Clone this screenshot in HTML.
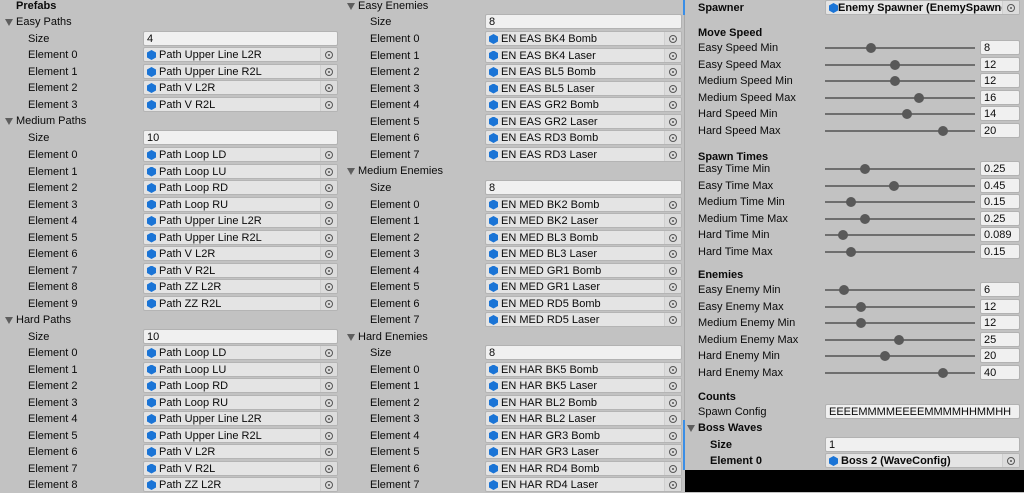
<!DOCTYPE html>
<html><head><meta charset="utf-8"><style>
*{margin:0;padding:0;box-sizing:border-box}
body{width:1024px;height:492px;background:#c2c2c2;font-family:"Liberation Sans",sans-serif;font-size:11px;color:#0a0a0a;position:relative;overflow:hidden}
.r{position:absolute;height:16px;line-height:16px;white-space:nowrap;margin-top:1px}
.b{font-weight:bold}
.t{position:absolute;width:0;height:0;border-left:4.5px solid transparent;border-right:4.5px solid transparent;border-top:7px solid #5e5e5e;top:5px}
.f{position:absolute;top:0;height:15px;line-height:14px;background:#f0f0f0;border:1px solid #b2b2b2;border-radius:2px;padding-left:3px;overflow:hidden}
.o{position:absolute;top:0;height:15px;line-height:14px;background:#e4e4e4;border:1px solid #b4b4b4;border-radius:2px;padding-left:15px;overflow:hidden}
.o:before{content:"";position:absolute;left:3px;top:2px;width:9px;height:10px;background:#1a74d6;clip-path:polygon(50% 0,100% 25%,100% 75%,50% 100%,0 75%,0 25%)}
.o:after{content:"";position:absolute;right:0;top:0;width:16px;height:13px;background:#dcdcdc;border-left:1px solid #cfcfcf}
.p{position:absolute;right:4px;top:3px;width:8px;height:8px;border:1px solid #555;border-radius:50%;z-index:2}
.p:after{content:"";position:absolute;left:2px;top:2px;width:2px;height:2px;background:#555;border-radius:50%}
.tr{position:absolute;left:825px;top:7px;width:150px;height:2px;background:#6e6e6e}
.k{position:absolute;top:3px;width:10px;height:10px;border-radius:50%;background:#595959}
.v{position:absolute;left:980px;width:40px}
</style></head><body>
<div style="position:absolute;left:684px;top:0;width:1px;height:470px;background:#a9a9a9"></div>
<div style="position:absolute;left:683px;top:0;width:2px;height:15px;background:#3a8ee6"></div>
<div style="position:absolute;left:683px;top:420px;width:2px;height:50px;background:#3a8ee6"></div>
<div style="position:absolute;left:685px;top:470px;width:339px;height:22px;background:#000"></div>

<!-- LEFT -->
<div class="r b" style="top:-3px;left:16px">Prefabs</div>
<div class="r" style="top:13px;left:0"><i class="t" style="left:5px"></i><span style="position:absolute;left:16px">Easy Paths</span></div>
<div class="r" style="top:30px;left:28px;width:312px">Size<div class="f" style="left:115px;width:195px">4</div></div>
<div class="r" style="top:46px;left:28px;width:312px">Element 0<div class="o" style="left:115px;width:195px">Path Upper Line L2R<i class="p"></i></div></div>
<div class="r" style="top:63px;left:28px;width:312px">Element 1<div class="o" style="left:115px;width:195px">Path Upper Line R2L<i class="p"></i></div></div>
<div class="r" style="top:79px;left:28px;width:312px">Element 2<div class="o" style="left:115px;width:195px">Path V L2R<i class="p"></i></div></div>
<div class="r" style="top:96px;left:28px;width:312px">Element 3<div class="o" style="left:115px;width:195px">Path V R2L<i class="p"></i></div></div>
<div class="r" style="top:112px;left:0"><i class="t" style="left:5px"></i><span style="position:absolute;left:16px">Medium Paths</span></div>
<div class="r" style="top:129px;left:28px;width:312px">Size<div class="f" style="left:115px;width:195px">10</div></div>
<div class="r" style="top:146px;left:28px">Element 0<div class="o" style="left:115px;width:195px">Path Loop LD<i class="p"></i></div></div>
<div class="r" style="top:162.5px;left:28px">Element 1<div class="o" style="left:115px;width:195px">Path Loop LU<i class="p"></i></div></div>
<div class="r" style="top:179px;left:28px">Element 2<div class="o" style="left:115px;width:195px">Path Loop RD<i class="p"></i></div></div>
<div class="r" style="top:195.5px;left:28px">Element 3<div class="o" style="left:115px;width:195px">Path Loop RU<i class="p"></i></div></div>
<div class="r" style="top:212px;left:28px">Element 4<div class="o" style="left:115px;width:195px">Path Upper Line L2R<i class="p"></i></div></div>
<div class="r" style="top:228.5px;left:28px">Element 5<div class="o" style="left:115px;width:195px">Path Upper Line R2L<i class="p"></i></div></div>
<div class="r" style="top:245px;left:28px">Element 6<div class="o" style="left:115px;width:195px">Path V L2R<i class="p"></i></div></div>
<div class="r" style="top:261.5px;left:28px">Element 7<div class="o" style="left:115px;width:195px">Path V R2L<i class="p"></i></div></div>
<div class="r" style="top:278px;left:28px">Element 8<div class="o" style="left:115px;width:195px">Path ZZ L2R<i class="p"></i></div></div>
<div class="r" style="top:294.5px;left:28px">Element 9<div class="o" style="left:115px;width:195px">Path ZZ R2L<i class="p"></i></div></div>
<div class="r" style="top:311px;left:0"><i class="t" style="left:5px"></i><span style="position:absolute;left:16px">Hard Paths</span></div>
<div class="r" style="top:328px;left:28px">Size<div class="f" style="left:115px;width:195px">10</div></div>
<div class="r" style="top:344px;left:28px">Element 0<div class="o" style="left:115px;width:195px">Path Loop LD<i class="p"></i></div></div>
<div class="r" style="top:360.5px;left:28px">Element 1<div class="o" style="left:115px;width:195px">Path Loop LU<i class="p"></i></div></div>
<div class="r" style="top:377px;left:28px">Element 2<div class="o" style="left:115px;width:195px">Path Loop RD<i class="p"></i></div></div>
<div class="r" style="top:393.5px;left:28px">Element 3<div class="o" style="left:115px;width:195px">Path Loop RU<i class="p"></i></div></div>
<div class="r" style="top:410px;left:28px">Element 4<div class="o" style="left:115px;width:195px">Path Upper Line L2R<i class="p"></i></div></div>
<div class="r" style="top:426.5px;left:28px">Element 5<div class="o" style="left:115px;width:195px">Path Upper Line R2L<i class="p"></i></div></div>
<div class="r" style="top:443px;left:28px">Element 6<div class="o" style="left:115px;width:195px">Path V L2R<i class="p"></i></div></div>
<div class="r" style="top:459.5px;left:28px">Element 7<div class="o" style="left:115px;width:195px">Path V R2L<i class="p"></i></div></div>
<div class="r" style="top:476px;left:28px">Element 8<div class="o" style="left:115px;width:195px">Path ZZ L2R<i class="p"></i></div></div>

<!-- MIDDLE -->
<div class="r" style="top:-3px;left:0"><i class="t" style="left:347px"></i><span style="position:absolute;left:358px">Easy Enemies</span></div>
<div class="r" style="top:13px;left:370px">Size<div class="f" style="left:115px;width:197px">8</div></div>
<div class="r" style="top:30px;left:370px">Element 0<div class="o" style="left:115px;width:197px">EN EAS BK4 Bomb<i class="p"></i></div></div>
<div class="r" style="top:46.5px;left:370px">Element 1<div class="o" style="left:115px;width:197px">EN EAS BK4 Laser<i class="p"></i></div></div>
<div class="r" style="top:63px;left:370px">Element 2<div class="o" style="left:115px;width:197px">EN EAS BL5 Bomb<i class="p"></i></div></div>
<div class="r" style="top:79.5px;left:370px">Element 3<div class="o" style="left:115px;width:197px">EN EAS BL5 Laser<i class="p"></i></div></div>
<div class="r" style="top:96px;left:370px">Element 4<div class="o" style="left:115px;width:197px">EN EAS GR2 Bomb<i class="p"></i></div></div>
<div class="r" style="top:112.5px;left:370px">Element 5<div class="o" style="left:115px;width:197px">EN EAS GR2 Laser<i class="p"></i></div></div>
<div class="r" style="top:129px;left:370px">Element 6<div class="o" style="left:115px;width:197px">EN EAS RD3 Bomb<i class="p"></i></div></div>
<div class="r" style="top:145.5px;left:370px">Element 7<div class="o" style="left:115px;width:197px">EN EAS RD3 Laser<i class="p"></i></div></div>
<div class="r" style="top:162px;left:0"><i class="t" style="left:347px"></i><span style="position:absolute;left:358px">Medium Enemies</span></div>
<div class="r" style="top:178.5px;left:370px">Size<div class="f" style="left:115px;width:197px">8</div></div>
<div class="r" style="top:195.5px;left:370px">Element 0<div class="o" style="left:115px;width:197px">EN MED BK2 Bomb<i class="p"></i></div></div>
<div class="r" style="top:212px;left:370px">Element 1<div class="o" style="left:115px;width:197px">EN MED BK2 Laser<i class="p"></i></div></div>
<div class="r" style="top:228.5px;left:370px">Element 2<div class="o" style="left:115px;width:197px">EN MED BL3 Bomb<i class="p"></i></div></div>
<div class="r" style="top:245px;left:370px">Element 3<div class="o" style="left:115px;width:197px">EN MED BL3 Laser<i class="p"></i></div></div>
<div class="r" style="top:261.5px;left:370px">Element 4<div class="o" style="left:115px;width:197px">EN MED GR1 Bomb<i class="p"></i></div></div>
<div class="r" style="top:278px;left:370px">Element 5<div class="o" style="left:115px;width:197px">EN MED GR1 Laser<i class="p"></i></div></div>
<div class="r" style="top:294.5px;left:370px">Element 6<div class="o" style="left:115px;width:197px">EN MED RD5 Bomb<i class="p"></i></div></div>
<div class="r" style="top:311px;left:370px">Element 7<div class="o" style="left:115px;width:197px">EN MED RD5 Laser<i class="p"></i></div></div>
<div class="r" style="top:327.5px;left:0"><i class="t" style="left:347px"></i><span style="position:absolute;left:358px">Hard Enemies</span></div>
<div class="r" style="top:344px;left:370px">Size<div class="f" style="left:115px;width:197px">8</div></div>
<div class="r" style="top:360.5px;left:370px">Element 0<div class="o" style="left:115px;width:197px">EN HAR BK5 Bomb<i class="p"></i></div></div>
<div class="r" style="top:377px;left:370px">Element 1<div class="o" style="left:115px;width:197px">EN HAR BK5 Laser<i class="p"></i></div></div>
<div class="r" style="top:393.5px;left:370px">Element 2<div class="o" style="left:115px;width:197px">EN HAR BL2 Bomb<i class="p"></i></div></div>
<div class="r" style="top:410px;left:370px">Element 3<div class="o" style="left:115px;width:197px">EN HAR BL2 Laser<i class="p"></i></div></div>
<div class="r" style="top:426.5px;left:370px">Element 4<div class="o" style="left:115px;width:197px">EN HAR GR3 Bomb<i class="p"></i></div></div>
<div class="r" style="top:443px;left:370px">Element 5<div class="o" style="left:115px;width:197px">EN HAR GR3 Laser<i class="p"></i></div></div>
<div class="r" style="top:459.5px;left:370px">Element 6<div class="o" style="left:115px;width:197px">EN HAR RD4 Bomb<i class="p"></i></div></div>
<div class="r" style="top:476px;left:370px">Element 7<div class="o" style="left:115px;width:197px">EN HAR RD4 Laser<i class="p"></i></div></div>

<!-- RIGHT -->
<div class="r b" style="top:-1px;left:698px">Spawner</div>
<div class="r" style="top:-1px;left:0"><div class="o b" style="left:825px;width:195px;padding-left:12px">Enemy Spawner (EnemySpawner)<i class="p"></i></div></div>
<div class="r b" style="top:24px;left:698px">Move Speed</div>
<div class="r" style="top:39px;left:0;width:1024px"><span style="position:absolute;left:698px">Easy Speed Min</span><i class="tr"></i><i class="k" style="left:866px"></i><div class="f v">8</div></div>
<div class="r" style="top:55.5px;left:0;width:1024px"><span style="position:absolute;left:698px">Easy Speed Max</span><i class="tr"></i><i class="k" style="left:890px"></i><div class="f v">12</div></div>
<div class="r" style="top:72px;left:0;width:1024px"><span style="position:absolute;left:698px">Medium Speed Min</span><i class="tr"></i><i class="k" style="left:890px"></i><div class="f v">12</div></div>
<div class="r" style="top:88.5px;left:0;width:1024px"><span style="position:absolute;left:698px">Medium Speed Max</span><i class="tr"></i><i class="k" style="left:914px"></i><div class="f v">16</div></div>
<div class="r" style="top:105px;left:0;width:1024px"><span style="position:absolute;left:698px">Hard Speed Min</span><i class="tr"></i><i class="k" style="left:902px"></i><div class="f v">14</div></div>
<div class="r" style="top:121.5px;left:0;width:1024px"><span style="position:absolute;left:698px">Hard Speed Max</span><i class="tr"></i><i class="k" style="left:938px"></i><div class="f v">20</div></div>
<div class="r b" style="top:148px;left:698px">Spawn Times</div>
<div class="r" style="top:160px;left:0;width:1024px"><span style="position:absolute;left:698px">Easy Time Min</span><i class="tr"></i><i class="k" style="left:860px"></i><div class="f v">0.25</div></div>
<div class="r" style="top:176.5px;left:0;width:1024px"><span style="position:absolute;left:698px">Easy Time Max</span><i class="tr"></i><i class="k" style="left:889px"></i><div class="f v">0.45</div></div>
<div class="r" style="top:193px;left:0;width:1024px"><span style="position:absolute;left:698px">Medium Time Min</span><i class="tr"></i><i class="k" style="left:846px"></i><div class="f v">0.15</div></div>
<div class="r" style="top:209.5px;left:0;width:1024px"><span style="position:absolute;left:698px">Medium Time Max</span><i class="tr"></i><i class="k" style="left:860px"></i><div class="f v">0.25</div></div>
<div class="r" style="top:226px;left:0;width:1024px"><span style="position:absolute;left:698px">Hard Time Min</span><i class="tr"></i><i class="k" style="left:838px"></i><div class="f v">0.089</div></div>
<div class="r" style="top:242.5px;left:0;width:1024px"><span style="position:absolute;left:698px">Hard Time Max</span><i class="tr"></i><i class="k" style="left:846px"></i><div class="f v">0.15</div></div>
<div class="r b" style="top:266px;left:698px">Enemies</div>
<div class="r" style="top:281px;left:0;width:1024px"><span style="position:absolute;left:698px">Easy Enemy Min</span><i class="tr"></i><i class="k" style="left:839px"></i><div class="f v">6</div></div>
<div class="r" style="top:297.5px;left:0;width:1024px"><span style="position:absolute;left:698px">Easy Enemy Max</span><i class="tr"></i><i class="k" style="left:856px"></i><div class="f v">12</div></div>
<div class="r" style="top:314px;left:0;width:1024px"><span style="position:absolute;left:698px">Medium Enemy Min</span><i class="tr"></i><i class="k" style="left:856px"></i><div class="f v">12</div></div>
<div class="r" style="top:330.5px;left:0;width:1024px"><span style="position:absolute;left:698px">Medium Enemy Max</span><i class="tr"></i><i class="k" style="left:894px"></i><div class="f v">25</div></div>
<div class="r" style="top:347px;left:0;width:1024px"><span style="position:absolute;left:698px">Hard Enemy Min</span><i class="tr"></i><i class="k" style="left:880px"></i><div class="f v">20</div></div>
<div class="r" style="top:363.5px;left:0;width:1024px"><span style="position:absolute;left:698px">Hard Enemy Max</span><i class="tr"></i><i class="k" style="left:938px"></i><div class="f v">40</div></div>
<div class="r b" style="top:388px;left:698px">Counts</div>
<div class="r" style="top:403px;left:0;width:1024px"><span style="position:absolute;left:698px">Spawn Config</span><div class="f" style="left:825px;width:195px">EEEEMMMMEEEEMMMMHHMMHH</div></div>
<div class="r b" style="top:419px;left:0"><i class="t" style="left:687px"></i><span style="position:absolute;left:698px">Boss Waves</span></div>
<div class="r b" style="top:436px;left:0;width:1024px"><span style="position:absolute;left:710px">Size</span><div class="f" style="left:825px;width:195px;font-weight:normal">1</div></div>
<div class="r b" style="top:452px;left:0;width:1024px"><span style="position:absolute;left:710px">Element 0</span><div class="o" style="left:825px;width:195px">Boss 2 (WaveConfig)<i class="p"></i></div></div>
</body></html>
